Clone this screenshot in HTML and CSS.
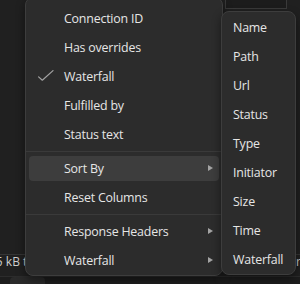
FILE: index.html
```html
<!DOCTYPE html>
<html>
<head>
<meta charset="utf-8">
<link rel="stylesheet" href="styles.css">
</head>
<body>
<div class="page">
  <div class="topbox"></div>
  <div class="spacer"></div>
  <div class="statusbar">
    <span class="status-clip"><span class="status-text">45 kB t</span></span>
    <span class="status-right">r</span>
  </div>
  <div class="bottomstrip"><div class="tab"></div></div>
</div>

<div class="menu main">
  <div class="item"><span class="slot"></span><span class="label">Connection ID</span></div>
  <div class="item"><span class="slot"></span><span class="label">Has overrides</span></div>
  <div class="item"><span class="slot"><svg class="check" width="16" height="12" viewBox="0 0 16 12"><path d="M0.6 6.9 L4.3 10.2 L15 0.6" fill="none" stroke="#a3a3a3" stroke-width="1.2" stroke-linecap="round" stroke-linejoin="round"/></svg></span><span class="label">Waterfall</span></div>
  <div class="item"><span class="slot"></span><span class="label">Fulfilled by</span></div>
  <div class="item"><span class="slot"></span><span class="label">Status text</span></div>
  <div class="sep"></div>
  <div class="item active"><span class="slot"></span><span class="label">Sort By</span><span class="arrow"></span></div>
  <div class="item"><span class="slot"></span><span class="label">Reset Columns</span></div>
  <div class="sep"></div>
  <div class="item"><span class="slot"></span><span class="label">Response Headers</span><span class="arrow"></span></div>
  <div class="item"><span class="slot"></span><span class="label">Waterfall</span><span class="arrow"></span></div>
</div>

<div class="menu sub">
  <div class="item"><span class="label">Name</span></div>
  <div class="item"><span class="label">Path</span></div>
  <div class="item"><span class="label">Url</span></div>
  <div class="item"><span class="label">Status</span></div>
  <div class="item"><span class="label">Type</span></div>
  <div class="item"><span class="label">Initiator</span></div>
  <div class="item"><span class="label">Size</span></div>
  <div class="item"><span class="label">Time</span></div>
  <div class="item"><span class="label">Waterfall</span></div>
</div>
</body>
</html>
```
FILE: styles.css
```css
html, body {
  margin: 0;
  padding: 0;
}
body {
  width: 300px;
  height: 284px;
  overflow: hidden;
  position: relative;
  background: #202020;
  font-family: "Open Sans", "Noto Sans", sans-serif;
  color: #e6e6e6;
}
.page {
  display: flex;
  flex-direction: column;
  height: 284px;
}
.topbox {
  margin-left: 225px;
  width: 62px;
  height: 9px;
  box-sizing: border-box;
  border: 1px solid #3a3a3a;
  border-top: none;
  background: #1c1c1c;
}
.spacer {
  flex: 1;
}
.statusbar {
  height: 21px;
  border-top: 1px solid #353535;
  display: flex;
  justify-content: space-between;
  font-size: 12px;
  line-height: 14px;
  color: #cfcfcf;
  white-space: nowrap;
  overflow: hidden;
}
.status-clip {
  width: 25px;
  overflow: hidden;
  display: block;
}
.status-text {
  display: block;
  margin-left: -11px;
}
.status-right {
  margin-right: -1px;
}
.bottomstrip {
  height: 7px;
  border-top: 1px solid #2c2c2c;
  background: #1d1d1d;
  display: flex;
}
.tab {
  margin-left: 10px;
  width: 35px;
  background: #2a2a2a;
  border-radius: 4px 4px 0 0;
}

.menu {
  position: absolute;
  box-sizing: border-box;
  background: #2c2c2c;
  border: 1px solid #3d3d3d;
  border-radius: 8px;
  display: flex;
  flex-direction: column;
  gap: 4px;
  box-shadow: 0 4px 10px rgba(0, 0, 0, 0.45);
}
.main {
  left: 25px;
  top: -3px;
  width: 198px;
  padding: 7.5px 3px 2.5px;
}
.sub {
  left: 221px;
  top: 11px;
  width: 75px;
  padding: 2.5px 3px;
}
.item {
  height: 25px;
  display: flex;
  align-items: center;
  border-radius: 4px;
  font-size: 12.4px;
  letter-spacing: -0.2px;
  white-space: nowrap;
}
.main .item {
  padding-right: 6px;
}
.sub .item {
  padding-left: 8px;
}
.item.active {
  background: #3d3d3d;
}
.slot {
  width: 35px;
  flex: none;
  display: flex;
  align-items: center;
}
.check {
  margin-left: 9px;
  display: block;
}
.arrow {
  margin-left: auto;
  width: 0;
  height: 0;
  border-top: 3.5px solid transparent;
  border-bottom: 3.5px solid transparent;
  border-left: 5px solid #a3a3a3;
}
.sep {
  height: 1px;
  margin: 0 -3px;
  background: #3a3a3a;
}
```
